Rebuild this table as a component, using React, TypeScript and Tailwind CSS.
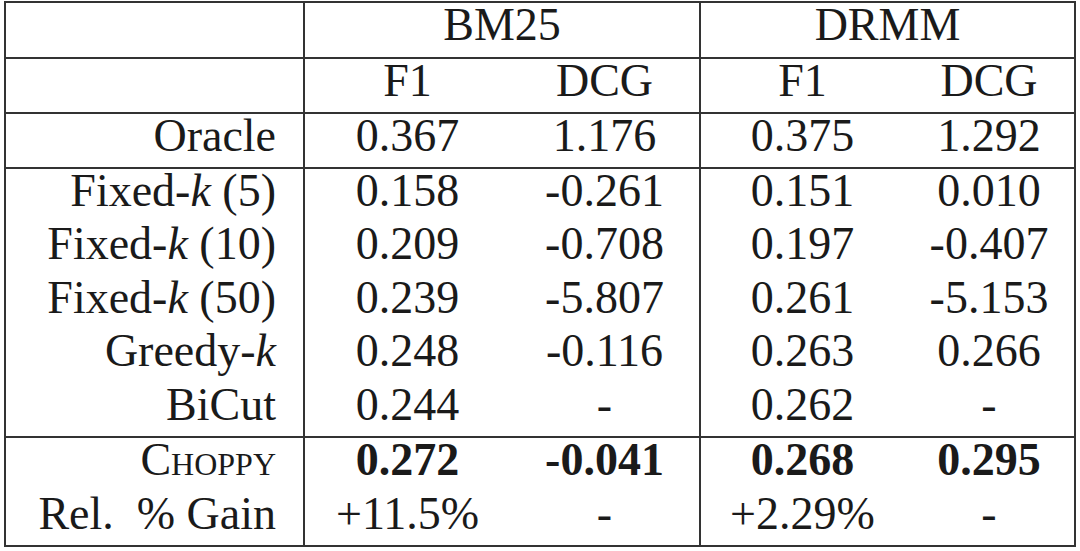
import React from "react";

type Row = {
  label: React.ReactNode;
  cells: string[];
  bold?: boolean;
};

const K = () => <span className="italic">k</span>;

const topGroup: Row[] = [{ label: "Oracle", cells: ["0.367", "1.176", "0.375", "1.292"] }];

const baselines: Row[] = [
  { label: <>Fixed-<K /> (5)</>, cells: ["0.158", "-0.261", "0.151", "0.010"] },
  { label: <>Fixed-<K /> (10)</>, cells: ["0.209", "-0.708", "0.197", "-0.407"] },
  { label: <>Fixed-<K /> (50)</>, cells: ["0.239", "-5.807", "0.261", "-5.153"] },
  { label: <>Greedy-<K /></>, cells: ["0.248", "-0.116", "0.263", "0.266"] },
  { label: "BiCut", cells: ["0.244", "-", "0.262", "-"] },
];

const ours: Row[] = [
  {
    label: <span className="[font-variant:small-caps]">Choppy</span>,
    cells: ["0.272", "-0.041", "0.268", "0.295"],
    bold: true,
  },
  { label: <>Rel.&nbsp; % Gain</>, cells: ["+11.5%", "-", "+2.29%", "-"] },
];

const line = "border-[#333]";
const cell = "align-middle p-0 pb-[10px] leading-[36px] whitespace-nowrap";

function BodyRow({ row, h, first }: { row: Row; h: number; first: boolean }) {
  const top = first ? `border-t-2 ${line}` : "";
  return (
    <tr style={{ height: h }}>
      <td className={`${cell} ${top} border-r-2 ${line} text-right pr-[27px]`}>{row.label}</td>
      {row.cells.map((c, i) => (
        <td
          key={i}
          className={`${cell} ${top} text-center ${i === 1 ? `border-r-2 ${line}` : ""} ${
            row.bold ? "font-bold" : ""
          }`}
        >
          {c}
        </td>
      ))}
    </tr>
  );
}

export default function App() {
  const baseHeights = [54, 54, 53, 54, 54];
  return (
    <div className="w-[1080px] h-[551px] bg-white pl-[4px] pt-[1px] overflow-hidden font-['Liberation_Serif','DejaVu_Serif',serif] text-[#1a1a1a] text-[46px]">
      <table className={`table-fixed border-collapse border-2 ${line} w-[1072px]`}>
        <colgroup>
          <col className="w-[299px]" />
          <col className="w-[206px]" />
          <col className="w-[190px]" />
          <col className="w-[204px]" />
          <col className="w-[171px]" />
        </colgroup>
        <tbody>
          <tr style={{ height: 56 }}>
            <td className={`${cell} border-r-2 ${line}`}></td>
            <td colSpan={2} className={`${cell} text-center border-r-2 ${line}`}>
              BM25
            </td>
            <td colSpan={2} className={`${cell} text-center`}>
              DRMM
            </td>
          </tr>
          <tr style={{ height: 55 }}>
            <td className={`${cell} border-t-2 border-r-2 ${line}`}></td>
            <td className={`${cell} border-t-2 ${line} text-center`}>F1</td>
            <td className={`${cell} border-t-2 border-r-2 ${line} text-center`}>DCG</td>
            <td className={`${cell} border-t-2 ${line} text-center`}>F1</td>
            <td className={`${cell} border-t-2 ${line} text-center`}>DCG</td>
          </tr>
          {topGroup.map((r, i) => (
            <BodyRow key={`o${i}`} row={r} h={55} first={i === 0} />
          ))}
          {baselines.map((r, i) => (
            <BodyRow key={`b${i}`} row={r} h={baseHeights[i]} first={i === 0} />
          ))}
          {ours.map((r, i) => (
            <BodyRow key={`c${i}`} row={r} h={i === 0 ? 55 : 54} first={i === 0} />
          ))}
        </tbody>
      </table>
    </div>
  );
}
